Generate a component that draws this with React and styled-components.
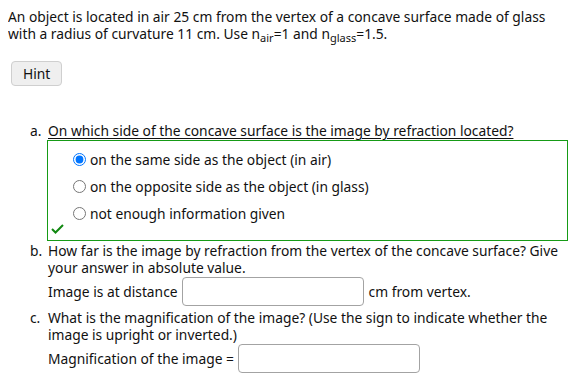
import React from "react";
import styled, { createGlobalStyle } from "styled-components";

const GlobalStyle = createGlobalStyle`
  body {
    margin: 8px;
    font-family: "Noto Sans", "DejaVu Sans", sans-serif;
    font-size: 13.8px;
    line-height: 17px;
    color: #111;
    background: #fff;
  }
`;

const Problem = styled.p`
  margin: 0;
  sub {
    font-size: 11px;
    line-height: 0;
    vertical-align: -3px;
  }
`;

const HintButton = styled.button`
  display: block;
  margin: 19px 0 0 3px;
  height: 25px;
  padding: 0 11px;
  font: inherit;
  color: #111;
  background: #efefef;
  border: 1px solid #cfcfcf;
  border-radius: 4px;
`;

const Parts = styled.div`
  margin-top: 36px;
  padding-left: 22px;
  width: 538px;
  display: flex;
  flex-direction: column;
`;

const Part = styled.div`
  display: grid;
  grid-template-columns: 18px 1fr;
  margin-top: ${(p) => p.gap || 0}px;
`;

const Marker = styled.span`
  grid-column: 1;
`;

const Body = styled.div`
  grid-column: 2;
  min-width: 0;
`;

const Question = styled.div`
  text-decoration: ${(p) => (p.underline ? "underline" : "none")};
  text-underline-offset: 2px;
`;

const AnswerBox = styled.div`
  margin: 1px 0 0 -1px;
  border: 1px solid #169b16;
  padding: 5px 0 6px 25px;
  display: flex;
  flex-direction: column;
`;

const Choice = styled.label`
  display: flex;
  align-items: center;
  height: 27px;
  input {
    margin: 0 4px 0 0;
    width: 13px;
    height: 13px;
  }
`;

const Check = styled.svg`
  display: block;
  margin: -3px 0 0 -22px;
`;

const AnswerRow = styled.div`
  display: flex;
  align-items: center;
  margin-top: 1px;
`;

const TextBox = styled.input`
  width: 182px;
  height: 29px;
  box-sizing: border-box;
  margin: 0 5px 0 4px;
  border: 1px solid #a3a3a3;
  border-radius: 4px;
  font: inherit;
`;

export default function App() {
  return (
    <>
      <GlobalStyle />
      <Problem>
        An object is located in air 25 cm from the vertex of a concave surface made of glass with a
        radius of curvature 11 cm. Use n<sub>air</sub>=1 and n<sub>glass</sub>=1.5.
      </Problem>
      <HintButton>Hint</HintButton>
      <Parts>
        <Part>
          <Marker>a.</Marker>
          <Body>
            <Question underline>
              On which side of the concave surface is the image by refraction located?
            </Question>
            <AnswerBox>
              <Choice>
                <input type="radio" name="side" defaultChecked />
                on the same side as the object (in air)
              </Choice>
              <Choice>
                <input type="radio" name="side" />
                on the opposite side as the object (in glass)
              </Choice>
              <Choice>
                <input type="radio" name="side" />
                not enough information given
              </Choice>
              <Check width="13" height="10" viewBox="0 0 13 10">
                <polyline points="1,5 4.5,8.5 12,1" fill="none" stroke="#118811" strokeWidth="2" />
              </Check>
            </AnswerBox>
          </Body>
        </Part>
        <Part gap={1}>
          <Marker>b.</Marker>
          <Body>
            <Question>
              How far is the image by refraction from the vertex of the concave surface? Give your
              answer in absolute value.
            </Question>
            <AnswerRow>
              Image is at distance
              <TextBox type="text" />
              cm from vertex.
            </AnswerRow>
          </Body>
        </Part>
        <Part gap={3}>
          <Marker>c.</Marker>
          <Body>
            <Question>
              What is the magnification of the image? (Use the sign to indicate whether the image is
              upright or inverted.)
            </Question>
            <AnswerRow>
              Magnification of the image =
              <TextBox type="text" />
            </AnswerRow>
          </Body>
        </Part>
      </Parts>
    </>
  );
}
